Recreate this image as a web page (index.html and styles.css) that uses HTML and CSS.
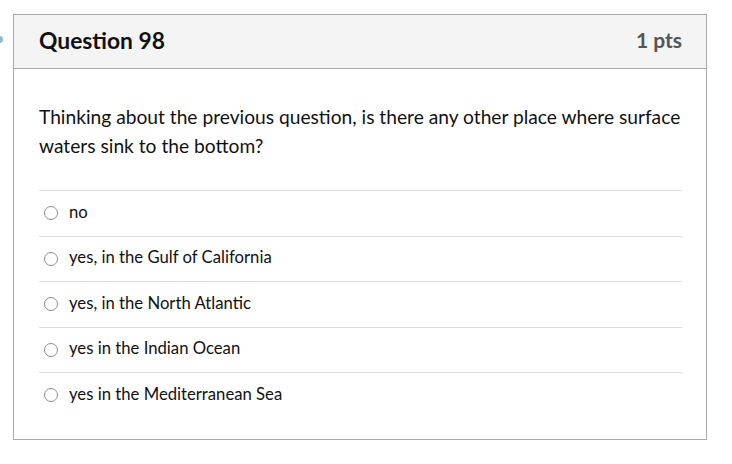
FILE: index.html
```html
<!DOCTYPE html>
<html lang="en">
<head>
<meta charset="utf-8">
<title>Question 98</title>
<link rel="stylesheet" href="styles.css">
</head>
<body>
<div class="page">
  <span class="marker"></span>
  <div class="card">
    <div class="card-header">
      <h2 class="q-title">Question 98</h2>
      <span class="q-points">1 pts</span>
    </div>
    <div class="card-body">
      <p class="q-text">Thinking about the previous question, is there any other place where surface waters sink to the bottom?</p>
      <div class="answers">
        <label class="answer"><span class="radio"></span><span class="answer-text">no</span></label>
        <label class="answer"><span class="radio"></span><span class="answer-text">yes, in the Gulf of California</span></label>
        <label class="answer"><span class="radio"></span><span class="answer-text">yes, in the North Atlantic</span></label>
        <label class="answer"><span class="radio"></span><span class="answer-text">yes in the Indian Ocean</span></label>
        <label class="answer"><span class="radio"></span><span class="answer-text">yes in the Mediterranean Sea</span></label>
      </div>
    </div>
  </div>
</div>
</body>
</html>
```

FILE: styles.css
```css
html, body {
  margin: 0;
  padding: 0;
  background: #ffffff;
}

body {
  font-family: Lato, "Liberation Sans", Arial, sans-serif;
  color: #2d3b45;
}

.page {
  position: relative;
  padding: 14px 0 0 13px;
}

.marker {
  position: absolute;
  left: -4px;
  top: 36px;
  width: 7px;
  height: 7px;
  border-radius: 50%;
  background: #8fb8d6;
}

.card {
  width: 692px;
  border: 1px solid #a9a9a9;
  background: #fff;
}

.card-header {
  display: flex;
  align-items: center;
  justify-content: space-between;
  box-sizing: border-box;
  height: 54px;
  padding: 0 24px 4px 25px;
  background: #f4f4f4;
  border-bottom: 1px solid #a9a9a9;
}

.q-title {
  margin: 0;
  font-size: 22.8px;
  font-weight: 700;
  color: #111;
}

.q-points {
  font-size: 21px;
  font-weight: 700;
  color: #555;
}

.card-body {
  padding: 33px 24px 21px 25px;
}

.q-text {
  margin: 0 0 30px;
  font-size: 19.2px;
  line-height: 29px;
  color: #111;
}

.answer {
  display: flex;
  align-items: center;
  gap: 11px;
  box-sizing: border-box;
  height: 45.5px;
  padding: 0 0 3px 5px;
  border-top: 1px solid #dcdcdc;
  font-size: 16.7px;
  color: #111;
}

.radio {
  box-sizing: border-box;
  width: 14px;
  height: 14px;
  margin-top: 3px;
  border: 1.5px solid #8a8a9c;
  border-radius: 50%;
  flex: none;
}
```
